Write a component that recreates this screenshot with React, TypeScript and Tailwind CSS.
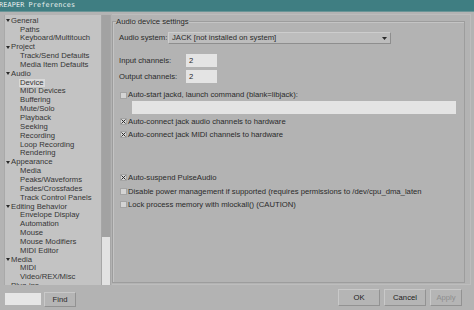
import React from 'react';

const tree: [string, number][] = [
  ['General', 0], ['Paths', 1], ['Keyboard/Multitouch', 1],
  ['Project', 0], ['Track/Send Defaults', 1], ['Media Item Defaults', 1],
  ['Audio', 0], ['Device', 1], ['MIDI Devices', 1], ['Buffering', 1], ['Mute/Solo', 1],
  ['Playback', 1], ['Seeking', 1], ['Recording', 1], ['Loop Recording', 1], ['Rendering', 1],
  ['Appearance', 0], ['Media', 1], ['Peaks/Waveforms', 1], ['Fades/Crossfades', 1], ['Track Control Panels', 1],
  ['Editing Behavior', 0], ['Envelope Display', 1], ['Automation', 1], ['Mouse', 1], ['Mouse Modifiers', 1], ['MIDI Editor', 1],
  ['Media', 0], ['MIDI', 1], ['Video/REX/Misc', 1],
  ['Plug-ins', 0],
];

const Check = ({ on }: { on?: boolean }) => (
  <div className="w-[7px] h-[7px] ml-[1px] mr-[1px] shrink-0 bg-[#d4d4d4] border border-[#a4a4a4] flex items-center justify-center">
    {on && (
      <svg width="5" height="5" viewBox="0 0 5 5">
        <path d="M0.5 0.5L4.5 4.5M4.5 0.5L0.5 4.5" stroke="#2a2a2a" strokeWidth="1" />
      </svg>
    )}
  </div>
);

const CheckRow = ({ on, label, mt }: { on?: boolean; label: string; mt: string }) => (
  <div className={`flex items-center h-[9px] whitespace-nowrap ${mt}`}>
    <Check on={on} />
    <span>{label}</span>
  </div>
);

const Btn = ({ label, w, disabled }: { label: string; w: string; disabled?: boolean }) => (
  <div className={`${w} h-[17px] flex items-center justify-center bg-[#b5b5b5] border border-t-[#c9c9c9] border-l-[#c9c9c9] border-b-[#929292] border-r-[#929292] ${disabled ? 'text-[#8e8e8e]' : 'text-[#222]'}`}>
    {label}
  </div>
);

export default function App() {
  return (
    <div className="w-[474px] h-[310px] overflow-hidden flex flex-col bg-[#b3b3b3] text-[#2a2a2a] text-[7.7px] leading-none" style={{ fontFamily: '"Liberation Sans", Arial, sans-serif' }}>
      <div className="h-[12px] shrink-0 bg-[#3f7e82] border-b border-[#6b9597] flex items-center">
        <span className="-ml-[1px] text-[#e6eeee] text-[6.8px] tracking-[0.02em]" style={{ fontFamily: '"DejaVu Sans Mono", "Liberation Mono", monospace' }}>
          REAPER Preferences
        </span>
      </div>

      <div className="flex h-[274px] shrink-0">
        <div className="flex pl-[4px] pt-[3px]">
          <div className="w-[97px] h-[270px] bg-[#c3c3c3] border-l border-[#a9a9a9] overflow-hidden pt-[1.3px] text-[#353535]">
            {tree.map(([name, lvl], i) => (
              <div key={i} className="h-[8.85px] flex items-center whitespace-nowrap">
                {lvl === 0 ? (
                  <>
                    <svg width="4" height="3" viewBox="0 0 4 3" className="ml-[1px] mr-[1px]">
                      <path d="M0 0H4L2 3Z" fill="#2a2a2a" />
                    </svg>
                    <span>{name}</span>
                  </>
                ) : (
                  <span className={`ml-[14px] px-[1px] leading-[8px] ${name === 'Device' ? 'bg-[#d9d9d9]' : ''}`}>{name}</span>
                )}
              </div>
            ))}
          </div>
          <div className="w-[10px] h-[270px] flex flex-col border-l border-r border-[#a6a6a6]">
            <div className="h-[222px] bg-[#a2a2a2]" />
            <div className="flex-1 bg-[#e2e2e2]" />
          </div>
        </div>

        <div className="ml-[1px] mt-[2px] w-[359px] h-[271px] border-t border-r border-b border-[#bdbdbd] flex">
          <fieldset className="mt-[1.5px] mr-[5px] mb-[1px] flex-1 border border-[#9d9d9d] shadow-[inset_1px_1px_0_#c4c4c4]">
            <legend className="ml-[3px] h-[9px] leading-[9px] px-0">Audio device settings</legend>
            <div className="flex flex-col pl-[6px]">
              <div className="mt-[6.5px] h-[12px] flex items-center">
                <span className="w-[49px]">Audio system:</span>
                <div className="w-[223px] h-[12px] bg-[#bdbdbd] border border-t-[#cdcdcd] border-l-[#cdcdcd] border-b-[#8e8e8e] border-r-[#8e8e8e] flex items-center pl-[3px] pr-[3px]">
                  <span className="flex-1">JACK [not installed on system]</span>
                  <svg width="5" height="3" viewBox="0 0 5 3">
                    <path d="M0 0H5L2.5 3Z" fill="#2a2a2a" />
                  </svg>
                </div>
              </div>
              <div className="mt-[10px] h-[13px] flex items-center">
                <span className="w-[67px]">Input channels:</span>
                <div className="w-[31px] h-[13px] bg-[#e4e4e4] flex items-center pl-[3px]">2</div>
              </div>
              <div className="mt-[3px] h-[13px] flex items-center">
                <span className="w-[67px]">Output channels:</span>
                <div className="w-[31px] h-[13px] bg-[#e4e4e4] flex items-center pl-[3px]">2</div>
              </div>
              <CheckRow mt="mt-[7.5px]" label="Auto-start jackd, launch command (blank=libjack):" />
              <div className="mt-[1.5px] ml-[13px] w-[324px] h-[13px] bg-[#e4e4e4]" />
              <CheckRow on mt="mt-[3.2px]" label="Auto-connect jack audio channels to hardware" />
              <CheckRow on mt="mt-[4.3px]" label="Auto-connect jack MIDI channels to hardware" />
              <CheckRow on mt="mt-[34px]" label="Auto-suspend PulseAudio" />
              <CheckRow mt="mt-[4.7px]" label="Disable power management if supported (requires permissions to /dev/cpu_dma_laten" />
              <CheckRow mt="mt-[4.3px]" label="Lock process memory with mlockall() (CAUTION)" />
            </div>
          </fieldset>
        </div>
      </div>

      <div className="flex-1 flex">
        <div className="ml-[5px] mt-[7px] w-[36px] h-[12px] bg-[#e6e6e6]" />
        <div className="ml-[3px] mt-[6px] w-[32px] h-[15px] flex items-center justify-center bg-[#b5b5b5] border border-t-[#c9c9c9] border-l-[#c9c9c9] border-b-[#929292] border-r-[#929292]">
          Find
        </div>
        <div className="ml-auto mr-[12px] mt-[3px] flex gap-[4px]">
          <Btn label="OK" w="w-[42px]" />
          <Btn label="Cancel" w="w-[42px]" />
          <Btn label="Apply" w="w-[32px]" disabled />
        </div>
      </div>
    </div>
  );
}
